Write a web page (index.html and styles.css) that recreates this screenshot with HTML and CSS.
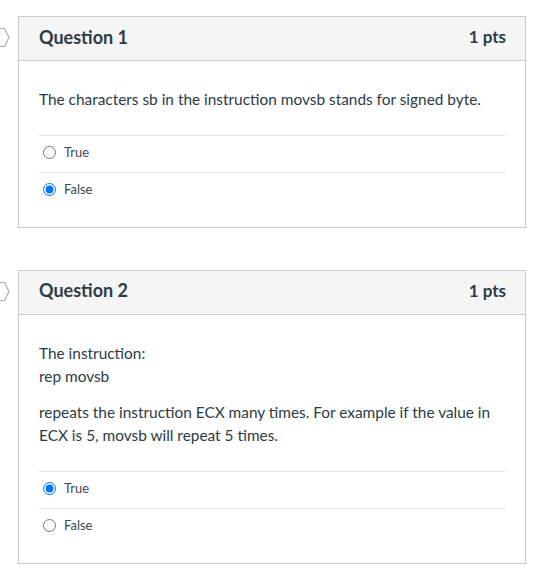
FILE: index.html
```html
<!DOCTYPE html>
<html lang="en">
<head>
<meta charset="utf-8">
<title>Quiz</title>
<link rel="stylesheet" href="styles.css">
</head>
<body>
<div class="quiz">
  <div class="question">
    <svg class="flag" width="13" height="19" viewBox="0 0 13 19"><polygon points="0.5,0.5 7.5,0.5 12,9.5 7.5,18.5 0.5,18.5" fill="#fff" stroke="#a5afb5" stroke-width="1.2"/></svg>
    <div class="q-header">
      <span class="q-title">Question 1</span>
      <span class="q-pts">1 pts</span>
    </div>
    <div class="q-body">
      <p class="q-text">The characters sb in the instruction movsb stands for signed byte.</p>
      <div class="answers">
        <label class="answer"><input type="radio" name="q1"><span>True</span></label>
        <label class="answer"><input type="radio" name="q1" checked><span>False</span></label>
      </div>
    </div>
  </div>

  <div class="question">
    <svg class="flag" width="13" height="19" viewBox="0 0 13 19"><polygon points="0.5,0.5 7.5,0.5 12,9.5 7.5,18.5 0.5,18.5" fill="#fff" stroke="#a5afb5" stroke-width="1.2"/></svg>
    <div class="q-header">
      <span class="q-title">Question 2</span>
      <span class="q-pts">1 pts</span>
    </div>
    <div class="q-body">
      <p class="q-text">The instruction:<br>rep movsb</p>
      <p class="q-text q-text-next">repeats the instruction ECX many times. For example if the value in ECX is 5, movsb will repeat 5 times.</p>
      <div class="answers">
        <label class="answer"><input type="radio" name="q2" checked><span>True</span></label>
        <label class="answer"><input type="radio" name="q2"><span>False</span></label>
      </div>
    </div>
  </div>
</div>
</body>
</html>
```
FILE: styles.css
```css
* { box-sizing: border-box; }
html, body { margin: 0; padding: 0; background: #fff; }
body {
  font-family: Lato, "Open Sans", "Liberation Sans", sans-serif;
  color: #2d3b45;
}
.quiz {
  padding: 16px 0 0 18px;
}
.question {
  position: relative;
  width: 508px;
  border: 1px solid #c7cdd1;
  margin-bottom: 42px;
  background: #fff;
}
.flag {
  position: absolute;
  left: -22px;
  top: 11px;
}
.q-header {
  height: 44px;
  background: #f5f5f5;
  border-bottom: 1px solid #c7cdd1;
  display: flex;
  align-items: center;
  justify-content: space-between;
  padding: 0 19px 4px 20px;
}
.q-title {
  font-size: 18px;
  font-weight: 700;
}
.q-pts {
  font-size: 17px;
  font-weight: 700;
}
.q-body {
  padding: 27px 19px 18px 20px;
}
.q-text {
  margin: 0;
  font-size: 15.4px;
  line-height: 23.5px;
}
.q-text-next {
  margin-top: 12px;
}
.answers {
  margin-top: 23px;
}
.answer {
  display: flex;
  align-items: center;
  height: 37px;
  border-top: 1px solid #e5e7e8;
  padding: 0 0 3px 4px;
  font-size: 13px;
  color: #3b4a54;
}
.answer input {
  margin: 0 8px 0 0;
  width: 13px;
  height: 13px;
}
```
